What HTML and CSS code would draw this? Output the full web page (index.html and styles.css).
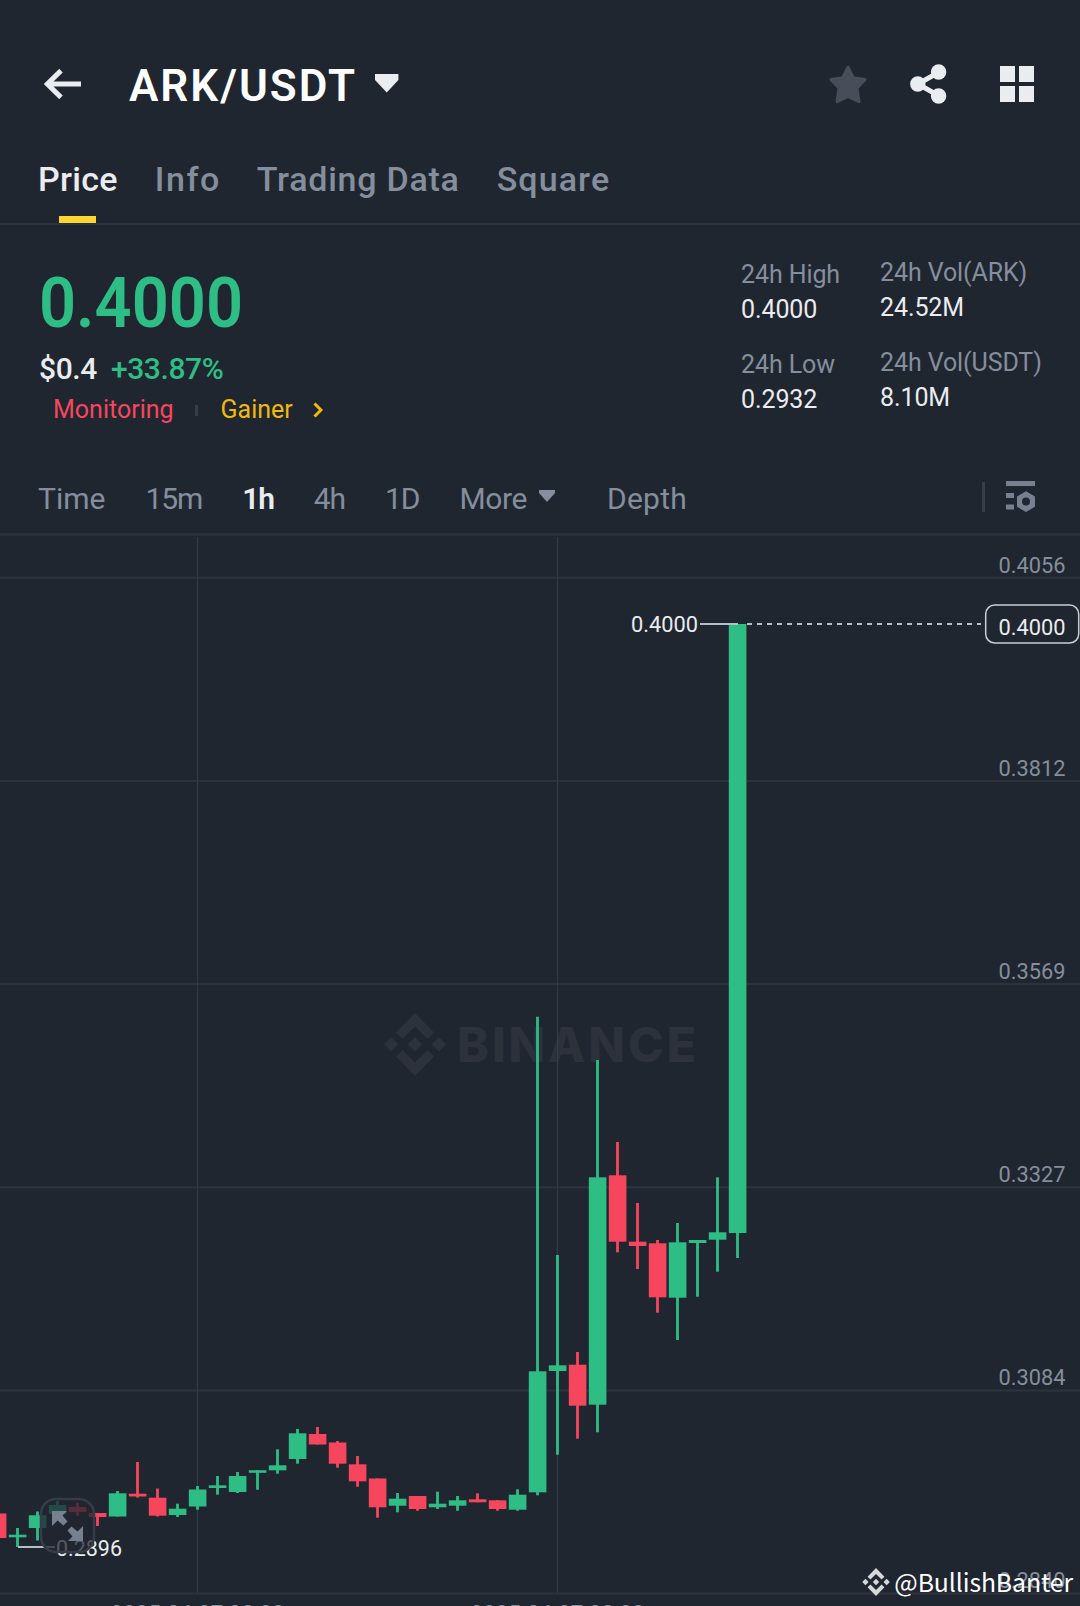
FILE: index.html
```html
<!DOCTYPE html>
<html lang="en">

<head>
  <meta charset="UTF-8">
  <meta name="viewport" content="width=device-width, initial-scale=1.0">
  <title>ARK/USDT</title>
  <link rel="stylesheet" href="styles.css">
</head>

<body>
  <header class="header">
    <svg class="back-icon" width="38" height="30" viewBox="0 0 38 30" fill="none" stroke="currentColor" stroke-width="5">
      <path d="M37 15H4M17 1.6L3.4 15L17 28.4" />
    </svg>
    <h1>ARK/USDT</h1>
    <svg class="pair-caret" width="24" height="19" viewBox="0 0 24 19" fill="currentColor">
      <path d="M0 0h23.4v6L11.7 18.6L0 6z" />
    </svg>
    <div class="header-actions">
      <svg width="38" height="39" viewBox="0 0 38 39" fill="#474d59" stroke="#474d59" stroke-width="3" stroke-linejoin="round">
        <path d="M19 2.2L24.3 12.8L36 14.6L28 23L30 36.6L19 31.4L8 36.6L10 23L2 14.6L13.7 12.8z" />
      </svg>
      <svg width="37" height="40" viewBox="0 0 37 40" fill="currentColor">
        <path d="M8 20L28.5 8.4M8 20L28.5 31.6" stroke="currentColor" stroke-width="5" />
        <circle cx="7.8" cy="20" r="7.7" />
        <circle cx="28.6" cy="8" r="7.7" />
        <circle cx="28.6" cy="32" r="7.7" />
      </svg>
      <svg width="34" height="36" viewBox="0 0 34 36" fill="currentColor">
        <path d="M0 0h15v16H0zM19 0h15v16H19zM0 20h15v16H0zM19 20h15v16H19z" />
      </svg>
    </div>
  </header>

  <nav class="tabs">
    <a class="tab active">Price</a>
    <a class="tab tab-info">Info</a>
    <a class="tab tab-data">Trading Data</a>
    <a class="tab tab-square">Square</a>
  </nav>

  <section class="ticker">
    <div class="quote">
      <div class="last-price">0.4000</div>
      <div class="quote-row">
        <span class="fiat">$0.4</span>
        <span class="change">+33.87%</span>
      </div>
      <div class="tags">
        <span class="tag-monitoring">Monitoring</span>
        <span class="tag-divider"></span>
        <span class="tag-gainer">Gainer</span>
        <svg width="10" height="16" viewBox="0 0 10 16" fill="none" stroke="#f0b90b" stroke-width="3">
          <path d="M1.5 1.5L8 8L1.5 14.5" />
        </svg>
      </div>
    </div>
    <dl class="stats">
      <div><dt>24h High</dt><dd>0.4000</dd></div>
      <div><dt>24h Low</dt><dd>0.2932</dd></div>
    </dl>
    <dl class="stats stats-volume">
      <div><dt>24h Vol(ARK)</dt><dd>24.52M</dd></div>
      <div><dt>24h Vol(USDT)</dt><dd>8.10M</dd></div>
    </dl>
  </section>

  <nav class="intervals">
    <span>Time</span>
    <span class="narrow">15m</span>
    <span class="narrow active">1h</span>
    <span class="narrow">4h</span>
    <span class="narrow">1D</span>
    <span class="more">More</span>
    <svg class="more-caret" width="16" height="12" viewBox="0 0 16 12" fill="currentColor"><path d="M0 0h16v3L8 12L0 3z" /></svg>
    <span class="depth">Depth</span>
    <i class="divider"></i>
    <svg class="settings-icon" width="30" height="31" viewBox="0 0 30 31" fill="currentColor">
      <path d="M0 0h29v5H0zM0 12h8v5H0zM0 23.5h8v5H0z" />
      <path fill-rule="evenodd" d="M20 10.2L29 15.4V25.8L20 31L11 25.8V15.4zM20 16.6a4 4 0 1 0 0 8a4 4 0 1 0 0-8z" />
    </svg>
  </nav>

  <main class="chart">
    <svg class="plot" width="1080" height="1069" viewBox="0 537 1080 1069">
      <g class="watermark">
        <g transform="translate(384 1013)">
          <path d="M31 0L50 19.5L43.5 26L31 13.5L18.5 26L12 19.5zM31 63L50 43.5L43.5 37L31 49.5L18.5 37L12 43.5zM31 24L38.2 31.3L31 38.6L23.8 31.3zM7.2 24L14.4 31.3L7.2 38.6L0 31.3zM55 24L62.2 31.3L55 38.6L47.8 31.3z" />
        </g>
        <text x="457" y="1062" textLength="239">BINANCE</text>
      </g>
      <g class="grid" id="grid"></g>
      <g id="candles"></g>

      <text class="mark" x="631" y="632" textLength="67" lengthAdjust="spacingAndGlyphs">0.4000</text>
      <path class="leader" d="M700 624H738" />
      <path class="leader dashed" d="M747 624H981" />
      <rect class="price-box" x="985.7" y="605" width="93" height="38" rx="9" />
      <text class="mark" x="998.5" y="635.3" textLength="67" lengthAdjust="spacingAndGlyphs">0.4000</text>

      <path class="leader" d="M18 1547H55" />
      <text class="mark" x="56" y="1556.4" textLength="66" lengthAdjust="spacingAndGlyphs">0.2896</text>

      <g class="expand">
        <rect x="41" y="1499" width="53" height="53" rx="15" />
        <path d="M52 1511H67L62.5 1515.5L67.5 1521.5L63.5 1525.5L57.5 1520.5L52 1526zM83 1541H68L72.5 1536.5L67.5 1530.5L71.5 1526.5L77.5 1531.5L83 1526z" />
      </g>
    </svg>
    <div class="author">
      <svg width="28" height="28" viewBox="0 0 62 63" fill="#d5d7da">
        <path d="M31 0L50 19.5L43.5 26L31 13.5L18.5 26L12 19.5zM31 63L50 43.5L43.5 37L31 49.5L18.5 37L12 43.5zM31 24L38.2 31.3L31 38.6L23.8 31.3zM7.2 24L14.4 31.3L7.2 38.6L0 31.3zM55 24L62.2 31.3L55 38.6L47.8 31.3z" />
      </svg>
      <span>@BullishBanter</span>
    </div>
  </main>

  <script src="chart.js"></script>
</body>

</html>
```
FILE: chart.js
```js
const SVG_NS = 'http://www.w3.org/2000/svg';

// [body top, body bottom, wick top, wick bottom, direction], one every 20px
const candles = [
  [1513.5, 1538, 1513.5, 1538, 'down'],
  [1534.7, 1537.3, 1528, 1547, 'up'],
  [1515.3, 1528, 1511.5, 1540.5, 'up'],
  [1505, 1514, 1501, 1514, 'up'],
  [1507, 1512, 1502.7, 1515.7, 'down'],
  [1513, 1517, 1513, 1526, 'down'],
  [1493.3, 1516.5, 1491, 1516.5, 'up'],
  [1493.7, 1496.5, 1462, 1497.5, 'down'],
  [1497.7, 1515.7, 1488.5, 1516.5, 'down'],
  [1508.7, 1515, 1503.7, 1517, 'up'],
  [1489.5, 1506.5, 1486, 1509.7, 'up'],
  [1485.3, 1488, 1476, 1494.7, 'up'],
  [1476, 1492, 1472, 1493, 'up'],
  [1470.2, 1472.8, 1470.3, 1489.7, 'up'],
  [1465.3, 1470.3, 1449.3, 1473.7, 'up'],
  [1433.3, 1459, 1429, 1463.7, 'up'],
  [1434, 1444.5, 1427, 1444.5, 'down'],
  [1442.5, 1463.7, 1441, 1467.7, 'down'],
  [1464.3, 1481.3, 1456, 1486.7, 'down'],
  [1478.5, 1507.3, 1478.5, 1517.7, 'down'],
  [1498.7, 1505.7, 1493, 1512.3, 'up'],
  [1496, 1509, 1496, 1510.7, 'down'],
  [1503.7, 1507.3, 1491.7, 1509, 'up'],
  [1500.3, 1505.7, 1496, 1510.7, 'up'],
  [1499.3, 1502.3, 1493.3, 1502.3, 'down'],
  [1500.3, 1509, 1500.3, 1510.7, 'down'],
  [1494.7, 1509.7, 1489.3, 1510.7, 'up'],
  [1371.3, 1492.3, 1016.7, 1495.3, 'up'],
  [1365.3, 1371, 1255, 1454.7, 'up'],
  [1364.7, 1405.7, 1352, 1438.7, 'down'],
  [1177.3, 1404.7, 1060, 1432.3, 'up'],
  [1175.3, 1241.7, 1142, 1252.3, 'down'],
  [1241.7, 1246, 1203, 1269, 'down'],
  [1243.3, 1297.3, 1240, 1312.7, 'down'],
  [1242.3, 1297.7, 1223, 1340, 'up'],
  [1240, 1243, 1240, 1296.7, 'up'],
  [1232.3, 1239.7, 1177.3, 1271.7, 'up'],
  [624, 1233, 624, 1258, 'up']
];

const priceLabels = ['0.4056', '0.3812', '0.3569', '0.3327', '0.3084', '0.2840'];
const timeLabels = [[197.5, '2025-04-07 02:00'], [557.5, '2025-04-07 20:00']];

function add(parent, name, attrs, text) {
  const el = document.createElementNS(SVG_NS, name);
  for (const key in attrs) el.setAttribute(key, attrs[key]);
  if (text) el.textContent = text;
  parent.appendChild(el);
}

const grid = document.getElementById('grid');
priceLabels.forEach((label, i) => {
  const y = 577.8 + i * 203.15;
  add(grid, 'path', { d: `M0 ${y}H1080` });
  add(grid, 'text', { x: 998.5, y: y - 5.2, textLength: 67, lengthAdjust: 'spacingAndGlyphs' }, label);
});
timeLabels.forEach(([x, label]) => {
  add(grid, 'path', { class: 'vertical', d: `M${x} 537V1593` });
  add(grid, 'text', { x: x - 87, y: 1620.5, textLength: 174, lengthAdjust: 'spacingAndGlyphs' }, label);
});

const layer = document.getElementById('candles');
candles.forEach(([top, bottom, high, low, dir], i) => {
  const x = -2.5 + i * 20;
  add(layer, 'rect', { class: dir, x: x - 1.4, y: high, width: 2.8, height: low - high });
  add(layer, 'rect', { class: dir, x: x - 8.7, y: top, width: 17.6, height: bottom - top });
});
```
FILE: styles.css
```css
:root {
  --background: #202630;
  --border: #2b303b;
  --grid: #2e323d;
  --text: #eaecef;
  --text-secondary: #848e9c;
  --up: #2ebd85;
  --down: #f6465d;
  --yellow: #fcd535;
}

* {
  box-sizing: border-box;
  margin: 0;
  padding: 0;
}

body {
  width: 1080px;
  height: 1606px;
  overflow: hidden;
  font-family: Roboto, 'Liberation Sans', sans-serif;
  background: var(--background);
  color: var(--text);
}

svg {
  display: block;
  flex-shrink: 0;
}

.header {
  display: flex;
  align-items: center;
  height: 136px;
  padding: 32px 46px 0 44px;
}

h1 {
  margin-left: 47px;
  padding-top: 3px;
  width: 228px;
  font-size: 44px;
  font-weight: 600;
  line-height: 52px;
  color: #fff;
  letter-spacing: 2px;
}

.pair-caret {
  margin-left: 18px;
  margin-bottom: 1px;
}

.header-actions {
  display: flex;
  align-items: center;
  margin-left: auto;
}

.header-actions svg + svg {
  margin-left: 43px;
}

.header-actions svg:last-child {
  margin-left: 53px;
}

.tabs {
  display: flex;
  height: 89px;
  padding-left: 38px;
  border-bottom: 2px solid var(--border);
  font-size: 34px;
  font-weight: 500;
  line-height: 40px;
  color: var(--text-secondary);
}

.tab {
  display: flex;
  flex-direction: column;
  align-items: center;
  justify-content: space-between;
  padding-top: 23px;
  margin-right: 37px;
  white-space: nowrap;
}

.tab.active {
  color: var(--text);
  letter-spacing: 0.3px;
}

.tab.active::after {
  content: '';
  width: 37px;
  height: 7px;
  background: var(--yellow);
}

.tab-info {
  margin-right: 36px;
  letter-spacing: 1.5px;
}

.tab-data {
  letter-spacing: 0.75px;
}

.tab-square {
  letter-spacing: 1.1px;
}

.ticker {
  display: flex;
  height: 237px;
  padding: 0 0 0 39px;
}

.quote {
  width: 702px;
  padding-top: 36px;
}

.last-price {
  font-size: 71px;
  font-weight: 600;
  line-height: 84px;
  color: var(--up);
  transform: scaleX(0.915);
  transform-origin: left;
}

.quote-row {
  display: flex;
  gap: 14px;
  margin-top: 6px;
  font-size: 30px;
  font-weight: 500;
  line-height: 36px;
  letter-spacing: -0.4px;
}

.change {
  color: var(--up);
}

.tags {
  display: flex;
  align-items: center;
  margin-top: 8px;
  padding-left: 14px;
  font-size: 25px;
  line-height: 30px;
}

.tag-monitoring {
  color: var(--down);
}

.tag-divider {
  width: 3px;
  height: 11px;
  margin: 0 23px 0 21px;
  background: #363c48;
}

.tag-gainer {
  margin-right: 20px;
  color: #f0b90b;
}

.stats {
  width: 139px;
  padding-top: 32px;
  font-size: 25px;
  letter-spacing: -0.1px;
  white-space: nowrap;
}

.stats-volume {
  padding-top: 30px;
}

.stats div {
  height: 90px;
}

dt {
  line-height: 35px;
  color: var(--text-secondary);
}

dd {
  line-height: 35px;
}

.intervals {
  display: flex;
  align-items: center;
  height: 74px;
  padding: 0 44px 2px 38px;
  border-bottom: 3px solid var(--border);
  font-size: 30px;
  color: var(--text-secondary);
}

.intervals span {
  margin-right: 40px;
  padding-top: 3px;
}

.intervals .narrow {
  letter-spacing: -1.1px;
}

.intervals .active {
  font-weight: 600;
  color: var(--text);
}

.intervals .more {
  margin-right: 12px;
  letter-spacing: -0.4px;
}

.more-caret {
  margin-right: 52px;
  margin-bottom: 1px;
}

.intervals .depth {
  letter-spacing: 0.3px;
}

.divider {
  width: 3px;
  height: 30px;
  margin-left: auto;
  margin-right: 21px;
  background: #363c48;
}

.settings-icon {
  color: #76808e;
}

.chart {
  position: relative;
  height: 1069px;
  margin-top: 1px;
}

.plot text {
  font-size: 22.5px;
}

.watermark {
  fill: #2c313b;
}

.plot .watermark text {
  font-family: Inter, sans-serif;
  font-size: 48px;
  font-weight: 800;
}

.grid path {
  stroke: var(--grid);
  stroke-width: 2;
}

.grid path.vertical {
  stroke: #363b45;
  stroke-width: 1.2;
}

.grid text {
  fill: var(--text-secondary);
}

.up {
  fill: var(--up);
}

.down {
  fill: var(--down);
}

.mark {
  fill: var(--text);
}

.leader {
  fill: none;
  stroke: #b7bdc6;
  stroke-width: 2;
}

.dashed {
  stroke-dasharray: 5 5;
}

.price-box {
  fill: var(--background);
  stroke: #c9cdd4;
  stroke-width: 1.5;
}

.expand rect {
  fill: rgba(32, 38, 48, 0.75);
  stroke: #363b47;
  stroke-width: 2.5;
}

.expand path {
  fill: #76808e;
}

/* Overlaid on the bottom right corner of the chart */
.author {
  position: absolute;
  right: 7px;
  bottom: 6px;
  display: flex;
  align-items: center;
  gap: 4px;
  font-family: 'Noto Sans CJK SC', sans-serif;
  font-size: 24.8px;
  line-height: 34px;
  letter-spacing: -0.1px;
  color: #fff;
}

.author span {
  padding-bottom: 2px;
}
```
